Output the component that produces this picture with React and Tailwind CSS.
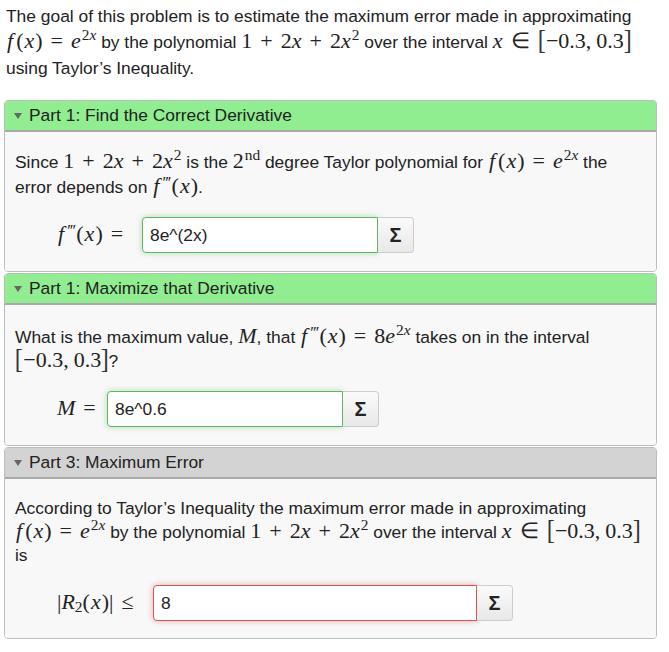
import React from "react";

const I = ({ children, className = "" }) => <i className={`italic ${className}`}>{children}</i>;

const Sup = ({ children }) => (
  <sup className="relative -top-[0.5em] ml-[1px] align-baseline text-[0.7em] leading-none">
    {children}
  </sup>
);

const M = ({ children }) => (
  <span className="whitespace-nowrap font-['Liberation_Serif',serif] text-[22px] leading-none">
    {children}
  </span>
);

const Eq = ({ children = "=" }) => <span className="mx-[8px]">{children}</span>;

const Br = ({ children }) => (
  <span className="inline-block origin-center scale-x-[1.1] scale-y-[1.2] text-[#333]">
    {children}
  </span>
);

const Fx = () => (
  <>
    <I className="pl-[1px] pr-[3px]">f</I>(<I className="px-[1px]">x</I>)<Eq />
    <I>e</I>
    <Sup>
      2<I>x</I>
    </Sup>
  </>
);

const Poly = () => (
  <>
    1<Eq>+</Eq>2<I>x</I>
    <Eq>+</Eq>2<I>x</I>
    <Sup>2</Sup>
  </>
);

const Interval = () => (
  <>
    <Br>[</Br>
    <span className="ml-[1px]">−0.3,</span>
    <span className="ml-[5px]">0.3</span>
    <Br>]</Br>
  </>
);

const Fppp = () => (
  <>
    <I className="pl-[1px]">f</I>
    <span className="relative -top-[0.3em] ml-[3px] mr-[1px] text-[17px] tracking-[-1px]">′′′</span>(
    <I className="px-[1px]">x</I>)
  </>
);

const Caret = () => (
  <svg width="8" height="6" viewBox="0 0 8 6" className="mr-[7px]">
    <path d="M0 0 L8 0 L4 6 Z" fill="#666" />
  </svg>
);

const Panel = ({ title, color, children, pad }) => (
  <div className="mb-[1px] overflow-hidden rounded-[4px] border border-[#bdbdbd]">
    <div
      className={`flex h-[31px] items-center border-b-2 border-[#a9a9a9] pl-[9px] text-[17.4px] text-[#222] ${color}`}
    >
      <Caret />
      {title}
    </div>
    <div className={`bg-[#f8f8f8] px-[10px] ${pad}`}>{children}</div>
  </div>
);

const Answer = ({ label, labelWidth, value, width, tone, gap }) => {
  const ring =
    tone === "red"
      ? "border-[#d9534f] shadow-[0_0_6px_rgba(217,83,79,0.45)]"
      : "border-[#5cb85c] shadow-[0_0_6px_rgba(92,184,92,0.45)]";
  return (
    <div className={`ml-[42px] flex items-center ${gap}`}>
      <div className={labelWidth}>
        <M>{label}</M>
      </div>
      <div className="flex">
        <div
          className={`flex h-[36px] items-center rounded-l-[4px] border bg-white px-[7px] text-[17.4px] text-[#222] ${ring} ${width}`}
        >
          {value}
        </div>
        <button className="flex h-[36px] w-[36px] items-center justify-center rounded-r-[4px] border border-l-0 border-[#ccc] bg-gradient-to-b from-[#fafafa] to-[#e8e8e8] text-[20px] font-bold text-[#222]">
          Σ
        </button>
      </div>
    </div>
  );
};

export default function App() {
  return (
    <div className="min-h-screen bg-white font-['Liberation_Sans',Arial,sans-serif] text-[17.4px] text-[#222]">
      <div className="w-[657px] pl-[4px] pt-[3px]">
        <p className="mb-[19px] pl-[2px] leading-[26px]">
          The goal of this problem is to estimate the maximum error made in approximating
          <br />
          <M>
            <Fx />
          </M>{" "}
          by the polynomial{" "}
          <M>
            <Poly />
          </M>{" "}
          over the interval{" "}
          <M>
            <I>x</I>
            <Eq>∈</Eq>
            <Interval />
          </M>
          <br />
          using Taylor’s Inequality.
        </p>

        <Panel title="Part 1: Find the Correct Derivative" color="bg-[#90ee90]" pad="pt-[18px] pb-[18px]">
          <p className="leading-[25px]">
            Since{" "}
            <M>
              <Poly />
            </M>{" "}
            is the{" "}
            <M>
              2<Sup>nd</Sup>
            </M>{" "}
            degree Taylor polynomial for{" "}
            <M>
              <Fx />
            </M>{" "}
            the
            <br />
            error depends on{" "}
            <M>
              <Fppp />
            </M>
            .
          </p>
          <Answer
            label={
              <>
                <Fppp />
                <Eq />
              </>
            }
            labelWidth="w-[85px]"
            value="8e^(2x)"
            width="w-[236px]"
            gap="mt-[17px]"
          />
        </Panel>

        <Panel title="Part 1: Maximize that Derivative" color="bg-[#90ee90]" pad="pt-[20px] pb-[18px]">
          <p className="leading-[23px]">
            What is the maximum value,{" "}
            <M>
              <I>M</I>
            </M>
            , that{" "}
            <M>
              <Fppp />
              <Eq />8<I>e</I>
              <Sup>
                2<I>x</I>
              </Sup>
            </M>{" "}
            takes on in the interval
            <br />
            <M>
              <Interval />
            </M>
            ?
          </p>
          <Answer
            label={
              <>
                <I>M</I>
                <Eq />
              </>
            }
            labelWidth="w-[50px]"
            value="8e^0.6"
            width="w-[236px]"
            gap="mt-[18px]"
          />
        </Panel>

        <Panel title="Part 3: Maximum Error" color="bg-[#d3d3d3]" pad="pt-[18px] pb-[17px]">
          <p className="leading-[23px]">
            According to Taylor’s Inequality the maximum error made in approximating
            <br />
            <M>
              <Fx />
            </M>{" "}
            by the polynomial{" "}
            <M>
              <Poly />
            </M>{" "}
            over the interval{" "}
            <M>
              <I>x</I>
              <Eq>∈</Eq>
              <Interval />
            </M>
            <br />
            is
          </p>
          <Answer
            label={
              <>
                |<I>R</I>
                <sub className="relative top-[0.2em] align-baseline text-[0.7em]">2</sub>(
                <I className="px-[1px]">x</I>)|
                <Eq>≤</Eq>
              </>
            }
            labelWidth="w-[96px]"
            value="8"
            width="w-[324px]"
            tone="red"
            gap="mt-[18px]"
          />
        </Panel>
      </div>
    </div>
  );
}
